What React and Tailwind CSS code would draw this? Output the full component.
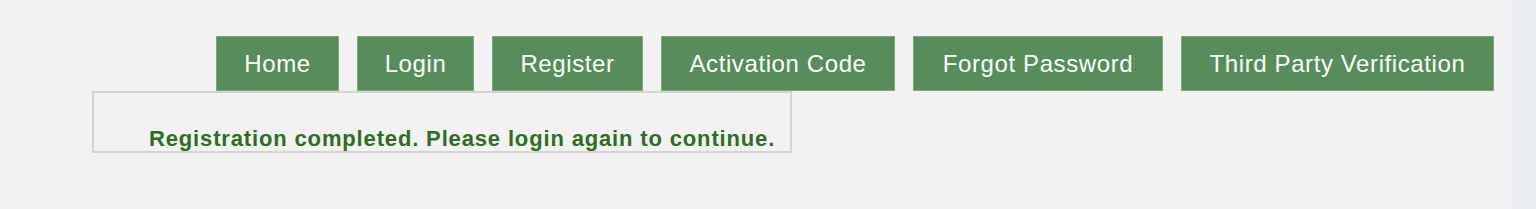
export default function App() {
  const tabs = [
    { label: "Home", w: "w-[123px]" },
    { label: "Login", w: "w-[117px]" },
    { label: "Register", w: "w-[151px]" },
    { label: "Activation Code", w: "w-[234px]" },
    { label: "Forgot Password", w: "w-[250px]" },
    { label: "Third Party Verification", w: "w-[313px]" },
  ];
  const tabClass =
    "h-[55px] flex items-center justify-center bg-[#568d5a] border border-[#7ea67f] text-white text-[24px] tracking-[0.6px] leading-none";

  return (
    <div className="h-[209px] w-full flex bg-[#f2f2f2] font-['Liberation_Sans',Arial,sans-serif]">
      <div className="flex-1 pt-[36px]">
        {/* menu */}
        <div className="flex gap-[18px] pl-[216px]">
          {tabs.map((t) => (
            <div key={t.label} className={`${tabClass} ${t.w}`}>
              {t.label}
            </div>
          ))}
        </div>

        {/* mensagem */}
        <div className="ml-[92px] w-[700px] h-[62px] border-2 border-[#d3d3d3] bg-[#f2f2f2] pl-[55px] pt-[35px]">
          <p className="text-[22px] font-bold leading-none tracking-[0.85px] text-[#2d6e1f] whitespace-nowrap">
            Registration completed. Please login again to continue.
          </p>
        </div>
      </div>
      <div className="w-[24px] h-full bg-[#e8ebf0]"></div>
    </div>
  );
}
